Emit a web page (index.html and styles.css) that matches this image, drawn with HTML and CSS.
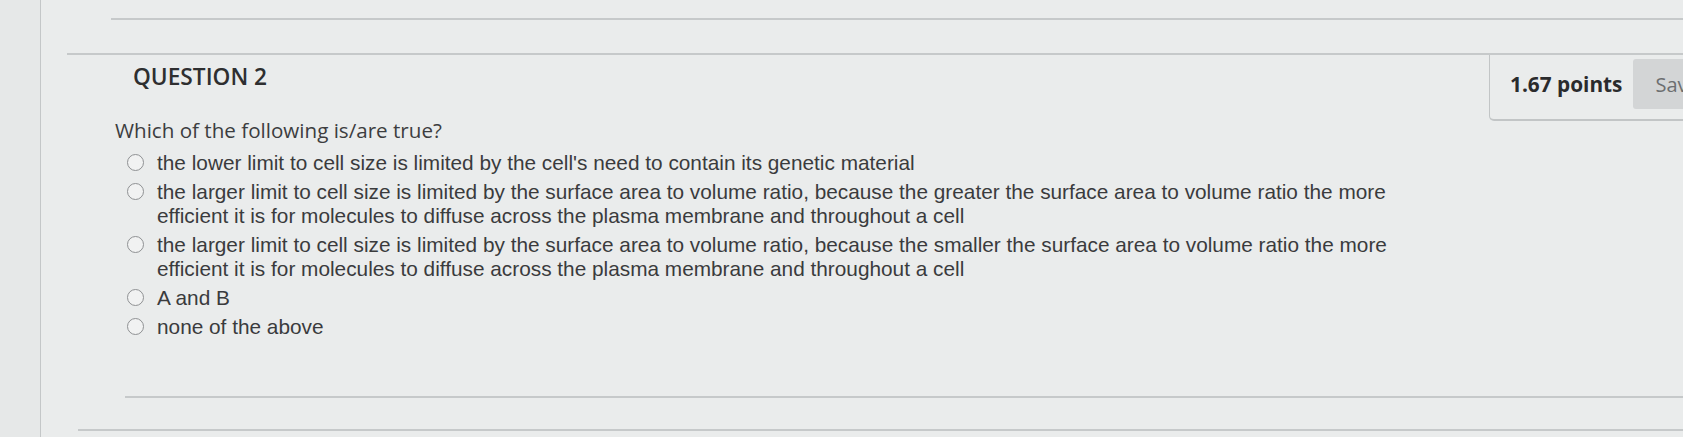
FILE: index.html
```html
<!DOCTYPE html>
<html lang="en">
<head>
<meta charset="utf-8">
<title>Question 2</title>
<link rel="stylesheet" href="styles.css">
</head>
<body>
<div class="page">
  <aside class="gutter"></aside>
  <main class="main">
    <div class="rule rule-top"></div>
    <div class="rule rule-second"></div>
    <section class="question">
      <div class="q-head">
        <h2 class="q-title">QUESTION 2</h2>
        <div class="points-box">
          <span class="points">1.67 points</span>
          <button class="save-btn" type="button">Save Answer</button>
        </div>
      </div>
      <p class="q-text">Which of the following is/are true?</p>
      <ul class="options">
        <li class="option"><span class="radio"></span><span class="opt-text">the lower limit to cell size is limited by the cell's need to contain its genetic material</span></li>
        <li class="option"><span class="radio"></span><span class="opt-text">the larger limit to cell size is limited by the surface area to volume ratio, because the greater the surface area to volume ratio the more efficient it is for molecules to diffuse across the plasma membrane and throughout a cell</span></li>
        <li class="option"><span class="radio"></span><span class="opt-text">the larger limit to cell size is limited by the surface area to volume ratio, because the smaller the surface area to volume ratio the more efficient it is for molecules to diffuse across the plasma membrane and throughout a cell</span></li>
        <li class="option"><span class="radio"></span><span class="opt-text">A and B</span></li>
        <li class="option option-last"><span class="radio"></span><span class="opt-text">none of the above</span></li>
      </ul>
    </section>
    <div class="rule rule-bottom"></div>
    <div class="rule rule-last"></div>
  </main>
</div>
</body>
</html>
```

FILE: styles.css
```css
html, body {
  margin: 0;
  padding: 0;
  background: #e9ebeb;
  overflow: hidden;
}

.page {
  display: flex;
  width: 1683px;
  height: 437px;
  overflow: hidden;
}

.gutter {
  width: 40px;
  flex: none;
  background: #e6e8e8;
  border-right: 1px solid #c4c7c8;
}

.main {
  flex: 1;
  min-width: 0;
  display: flex;
  flex-direction: column;
  background: #eaecec;
}

.rule {
  height: 2px;
  background: #c6c9ca;
  flex: none;
}

.rule-top {
  margin-top: 18px;
  margin-left: 70px;
}

.rule-second {
  margin-top: 33px;
  margin-left: 26px;
}

.q-head {
  display: flex;
  align-items: flex-start;
  padding-left: 92px;
}

.q-title {
  margin: 0;
  padding-top: 6px;
  font-family: "Open Sans", "Liberation Sans", sans-serif;
  font-weight: 600;
  font-size: 22.7px;
  line-height: 32px;
  color: #2e2f30;
}

.points-box {
  margin-left: auto;
  width: 173px;
  height: 64px;
  padding-left: 20px;
  box-sizing: content-box;
  display: flex;
  align-items: center;
  gap: 11px;
  border-left: 1px solid #c2c5c6;
  border-bottom: 2px solid #c2c5c6;
  border-bottom-left-radius: 5px;
  overflow: hidden;
  white-space: nowrap;
}

.points {
  font-family: "Open Sans", "Liberation Sans", sans-serif;
  font-weight: 700;
  font-size: 20.8px;
  color: #2a2b2d;
  margin-top: -6px;
}

.save-btn {
  flex: none;
  height: 50px;
  margin-top: -6px;
  padding: 0 22px;
  border: none;
  border-radius: 3px;
  background: #d3d5d6;
  color: #6c6e70;
  font-family: "Open Sans", "Liberation Sans", sans-serif;
  font-size: 20px;
}

.q-text {
  margin: -3px 0 0 74px;
  font-family: "Open Sans", "Liberation Sans", sans-serif;
  font-size: 20.6px;
  line-height: 24px;
  color: #3c3d3f;
}

.options {
  list-style: none;
  margin: 9px 0 0 86px;
  padding: 0;
  display: flex;
  flex-direction: column;
  gap: 5px;
}

.option {
  display: flex;
  align-items: flex-start;
  gap: 13px;
}

.radio {
  flex: none;
  width: 15px;
  height: 15px;
  margin-top: 3px;
  border: 1.5px solid #8f9193;
  border-radius: 50%;
  background: #f1f2f2;
}

.opt-text {
  max-width: 1262px;
  font-family: "Liberation Sans", Arial, sans-serif;
  font-size: 20.8px;
  line-height: 24px;
  color: #3a3b3d;
}

.rule-bottom {
  margin-top: 57px;
  margin-left: 84px;
}

.rule-last {
  margin-top: 31px;
  margin-left: 37px;
}
```
